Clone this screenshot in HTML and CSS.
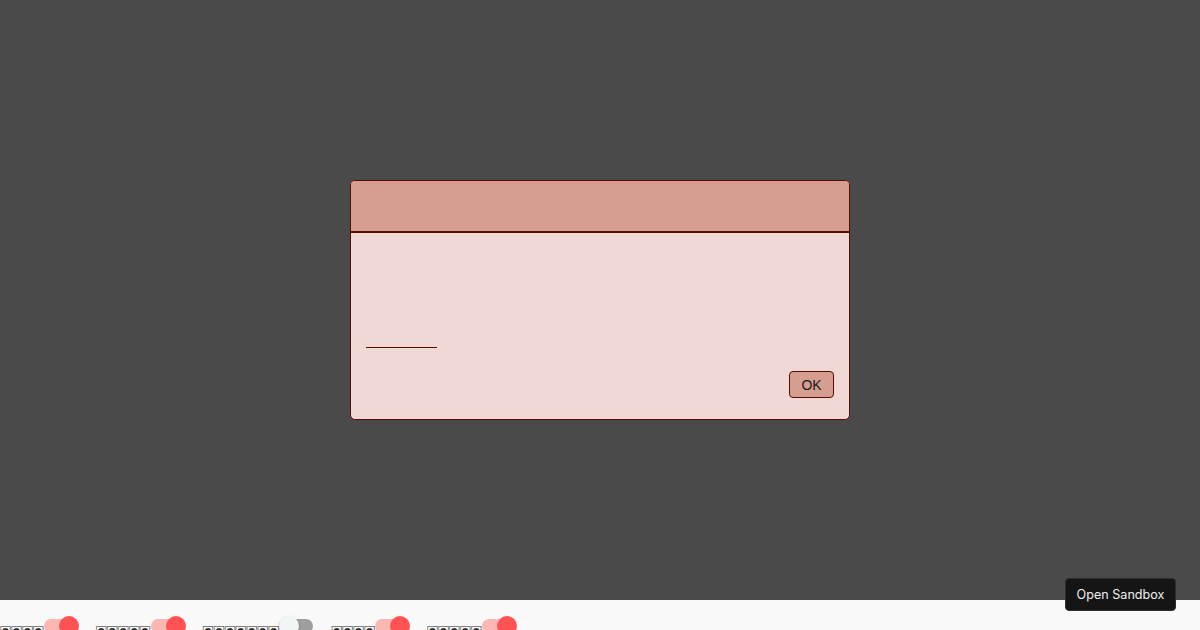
FILE: index.html
```html
<!DOCTYPE html>
<html lang="en">
<head>
<meta charset="utf-8">
<title>Dialog</title>
<link rel="stylesheet" href="styles.css">
</head>
<body>
<div class="stage">
  <div class="dialog">
    <div class="dialog-header"></div>
    <div class="dialog-body">
      <div class="field"></div>
      <div class="actions">
        <button class="ok">OK</button>
      </div>
    </div>
  </div>
</div>
<div class="toggles">
  <label class="tg"><span class="lbl">&#xE000;&#xE001;&#xE002;&#xE003;</span><span class="sw on"><span class="track"></span><span class="thumb"></span></span></label>
  <label class="tg"><span class="lbl">&#xE004;&#xE005;&#xE006;&#xE007;&#xE008;</span><span class="sw on"><span class="track"></span><span class="thumb"></span></span></label>
  <label class="tg"><span class="lbl">&#xE009;&#xE00A;&#xE00B;&#xE00C;&#xE00D;&#xE00E;&#xE00F;</span><span class="sw"><span class="track"></span><span class="thumb"></span></span></label>
  <label class="tg"><span class="lbl">&#xE010;&#xE011;&#xE012;&#xE013;</span><span class="sw on"><span class="track"></span><span class="thumb"></span></span></label>
  <label class="tg"><span class="lbl">&#xE014;&#xE015;&#xE016;&#xE017;&#xE018;</span><span class="sw on"><span class="track"></span><span class="thumb"></span></span></label>
</div>
<a class="sandbox">Open Sandbox</a>
</body>
</html>
```
FILE: styles.css
```css
html, body {
  margin: 0;
  padding: 0;
  background: #f9f9f9;
  font-family: "Liberation Sans", Arial, sans-serif;
  overflow: hidden;
}

.stage {
  height: 600px;
  background: #4a4a4a;
  display: flex;
  align-items: flex-start;
  justify-content: center;
  padding-top: 180px;
  box-sizing: border-box;
}

.dialog {
  width: 500px;
  height: 240px;
  box-sizing: border-box;
  border: 1px solid #5a0c00;
  border-radius: 5px;
  background: #f0d9d5;
  display: flex;
  flex-direction: column;
  overflow: hidden;
}

.dialog-header {
  height: 50px;
  background: #d69d91;
  border-bottom: 2px solid #5a0c00;
}

.dialog-body {
  flex: 1;
  padding: 114px 15px 21px 15px;
  display: flex;
  flex-direction: column;
}

.field {
  width: 71px;
  height: 0;
  border-bottom: 1px solid #5a0c00;
}

.actions {
  margin-top: auto;
  display: flex;
  justify-content: flex-end;
}

.ok {
  width: 45px;
  height: 27px;
  box-sizing: border-box;
  background: #d69d91;
  border: 1px solid #5a0c00;
  border-radius: 4px;
  font-family: "Liberation Sans", Arial, sans-serif;
  font-size: 14px;
  color: #1a1a1a;
  padding: 0;
}

.toggles {
  display: flex;
  align-items: flex-start;
  height: 30px;
  padding-top: 16px;
  box-sizing: content-box;
}

.tg {
  display: flex;
  align-items: flex-start;
  margin-right: 17px;
}

.lbl {
  font-family: Lato, sans-serif;
  font-size: 20.6px;
  line-height: 20px;
  color: #222;
  margin-top: 7px;
}

.sw {
  position: relative;
  width: 35px;
  height: 20px;
}

.track {
  position: absolute;
  left: 0;
  top: 3px;
  width: 34px;
  height: 14px;
  border-radius: 7px;
  background: #9e9e9e;
}

.thumb {
  position: absolute;
  left: 0;
  top: 0;
  width: 20px;
  height: 20px;
  border-radius: 50%;
  background: #f2f5f5;
  box-shadow: 0 1px 3px rgba(0,0,0,0.2);
}

.sw.on .track {
  background: #fbb8b3;
}

.sw.on .thumb {
  left: 15px;
  background: #ff5252;
  box-shadow: none;
}

.sandbox {
  position: fixed;
  right: 24px;
  bottom: 19px;
  width: 111px;
  height: 33px;
  box-sizing: border-box;
  background: #151515;
  border: 1px solid #2e2e2e;
  border-radius: 4px;
  color: #f0f0f0;
  font-family: Inter, "Liberation Sans", sans-serif;
  font-size: 12.6px;
  display: flex;
  align-items: center;
  justify-content: center;
}
```
